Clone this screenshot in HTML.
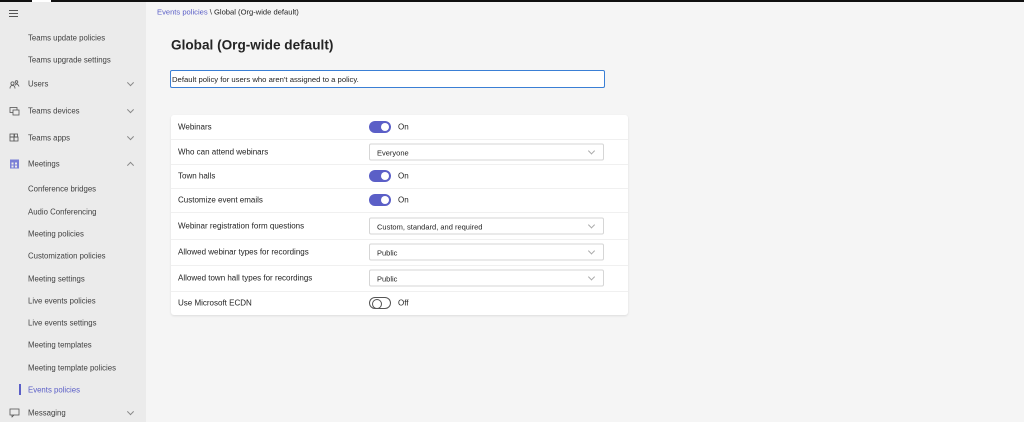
<!DOCTYPE html>
<html><head><style>
*{box-sizing:border-box;margin:0;padding:0}
body{width:1024px;height:422px;overflow:hidden;background:#f5f5f5;font-family:"Liberation Sans",sans-serif;color:#242424;position:relative}
.top{position:absolute;left:0;top:0;width:1024px;height:2px;background:#111}
.top i{position:absolute;left:32px;top:0;width:19px;height:2px;background:#fff}
.side{position:absolute;left:0;top:2px;width:146px;height:420px;background:#ebebeb}
.si{position:absolute;left:28px;font-size:7.8px;color:#424242;transform:translateY(-50%)}
.ic{position:absolute;left:9px;width:11px;height:9px;transform:translateY(-50%)}
.chev{position:absolute;left:128px;width:5px;height:5px;border-right:1px solid #888;border-bottom:1px solid #888;transform:translateY(-75%) rotate(45deg)}
.chev.up{transform:translateY(-25%) rotate(-135deg)}
.t{position:absolute;font-size:8px;transform:translateY(-50%);white-space:nowrap}
.card{position:absolute;left:171px;top:115px;width:457px;height:200px;background:#fff;border-radius:3px;box-shadow:0 1px 2px rgba(0,0,0,.1)}
.row{position:absolute;left:0;width:457px;border-top:1px solid #f0f0f0}
.tog{position:absolute;left:369px;width:22px;height:12px;border-radius:6px;background:#5b5fc7;transform:translateY(-50%)}
.tog::after{content:"";position:absolute;right:2px;top:2px;width:8px;height:8px;border-radius:50%;background:#fff}
.tog.off{background:#fff;border:1px solid #555}
.tog.off::after{left:2px;right:auto;top:1px;border:1px solid #555}
.dd{position:absolute;left:369px;width:235px;height:17px;border:1px solid #d6d6d6;border-radius:2px;background:#fff;transform:translateY(-50%);font-size:7.5px;padding:4px 0 0 7px}
.dd::after{content:"";position:absolute;right:9px;top:4px;width:4px;height:4px;border-right:1px solid #aaa;border-bottom:1px solid #aaa;transform:rotate(45deg)}
</style></head><body>
<div class="top"><i></i></div>
<div class="side">
<div style="position:absolute;left:9px;top:8px;width:9px;height:1px;background:#555;box-shadow:0 3px 0 #555,0 6px 0 #555"></div>
</div>
<div class="si" style="top:38px">Teams update policies</div>
<div class="si" style="top:60px">Teams upgrade settings</div>
<svg class="ic" style="top:84px" viewBox="0 0 11 9"><circle cx="3.5" cy="4" r="1.6" fill="none" stroke="#555" stroke-width=".8"/><circle cx="7.5" cy="2.5" r="1.3" fill="none" stroke="#555" stroke-width=".8"/><path d="M1 9c0-2 1-3 2.5-3S6 7 6 9M6 6c.5-1 1-1.5 1.5-1.5S9.5 5 10 7" fill="none" stroke="#555" stroke-width=".8"/></svg>
<div class="si" style="top:84px">Users</div><div class="chev" style="top:84px"></div>
<svg class="ic" style="top:111px" viewBox="0 0 11 9"><rect x="1" y="1" width="7" height="5" fill="none" stroke="#555" stroke-width=".8"/><rect x="4" y="3.5" width="6" height="5" fill="#ebebeb" stroke="#555" stroke-width=".8"/></svg>
<div class="si" style="top:111px">Teams devices</div><div class="chev" style="top:111px"></div>
<svg class="ic" style="top:138px" viewBox="0 0 11 9"><rect x="1" y="3.5" width="4" height="4" fill="none" stroke="#555" stroke-width=".8"/><rect x="5" y="3.5" width="4" height="4" fill="none" stroke="#555" stroke-width=".8"/><rect x="5.5" y=".5" width="3" height="3" fill="none" stroke="#555" stroke-width=".8"/><rect x="1" y=".5" width="4" height="3" fill="none" stroke="#555" stroke-width=".8"/></svg>
<div class="si" style="top:138px">Teams apps</div><div class="chev" style="top:138px"></div>
<svg class="ic" style="top:164px" viewBox="0 0 11 9"><rect x="1" y="0" width="9" height="9" fill="#7a7fd6"/><rect x="2.5" y="3" width="2" height="2" fill="#ebebeb"/><rect x="6" y="3" width="2" height="2" fill="#ebebeb"/><rect x="2.5" y="6" width="2" height="2" fill="#ebebeb"/><rect x="6" y="6" width="2" height="2" fill="#ebebeb"/></svg>
<div class="si" style="top:164px">Meetings</div><div class="chev up" style="top:164px"></div>
<div class="si" style="top:189px">Conference bridges</div>
<div class="si" style="top:212px">Audio Conferencing</div>
<div class="si" style="top:234px">Meeting policies</div>
<div class="si" style="top:256px">Customization policies</div>
<div class="si" style="top:279px">Meeting settings</div>
<div class="si" style="top:301px">Live events policies</div>
<div class="si" style="top:323px">Live events settings</div>
<div class="si" style="top:345px">Meeting templates</div>
<div class="si" style="top:368px">Meeting template policies</div>
<div style="position:absolute;left:19px;top:384px;width:2px;height:11px;background:#5b5fc7"></div>
<div class="si" style="top:390px;color:#5b5fc7">Events policies</div>
<svg class="ic" style="top:413px" viewBox="0 0 11 9"><rect x="1" y="0.5" width="9" height="6" fill="none" stroke="#555" stroke-width=".8"/><path d="M3 6.5v2l2-2" fill="none" stroke="#555" stroke-width=".8"/></svg>
<div class="si" style="top:413px">Messaging</div><div class="chev" style="top:413px"></div>

<div class="t" style="left:157px;top:12px;font-size:7.6px"><span style="color:#5b5fc7">Events policies</span> \ Global (Org-wide default)</div>
<div class="t" style="left:171px;top:45px;font-size:13.6px;font-weight:bold">Global (Org-wide default)</div>
<div style="position:absolute;left:170px;top:70px;width:435px;height:18px;border:1.5px solid #3a7fd5;border-radius:2px;background:#fff;font-size:7.7px;padding:3.5px 0 0 1px">Default policy for users who aren't assigned to a policy.</div>

<div class="card">
<div class="row" style="top:24px"></div><div class="row" style="top:49px"></div><div class="row" style="top:73px"></div><div class="row" style="top:97px"></div><div class="row" style="top:124px"></div><div class="row" style="top:150px"></div><div class="row" style="top:176px"></div>
</div>
<div class="t" style="left:178px;top:127px">Webinars</div><div class="tog" style="top:127px"></div><div class="t" style="left:398px;top:127px">On</div>
<div class="t" style="left:178px;top:152px">Who can attend webinars</div><div class="dd" style="top:152px">Everyone</div>
<div class="t" style="left:178px;top:176px">Town halls</div><div class="tog" style="top:176px"></div><div class="t" style="left:398px;top:176px">On</div>
<div class="t" style="left:178px;top:200px">Customize event emails</div><div class="tog" style="top:200px"></div><div class="t" style="left:398px;top:200px">On</div>
<div class="t" style="left:178px;top:226px">Webinar registration form questions</div><div class="dd" style="top:226px">Custom, standard, and required</div>
<div class="t" style="left:178px;top:252px">Allowed webinar types for recordings</div><div class="dd" style="top:252px">Public</div>
<div class="t" style="left:178px;top:278px">Allowed town hall types for recordings</div><div class="dd" style="top:278px">Public</div>
<div class="t" style="left:178px;top:303px">Use Microsoft ECDN</div><div class="tog off" style="top:303px"></div><div class="t" style="left:398px;top:303px">Off</div>
</body></html>
